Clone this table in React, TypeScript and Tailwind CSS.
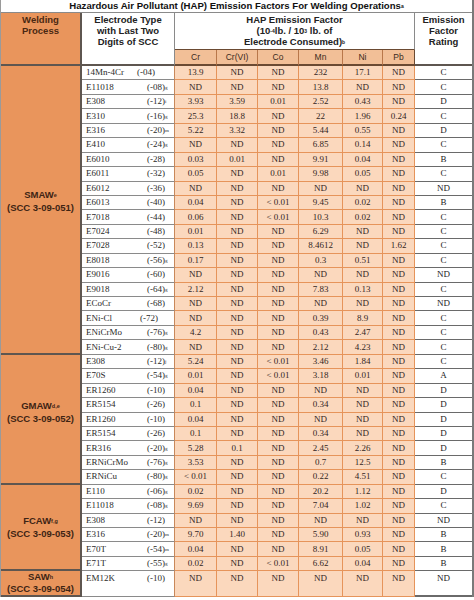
import React from 'react';

type Row = {
  name: string;
  code: string;
  sup?: string;
  wide?: boolean;
  vals: string[];
  rating: string;
};

const r = (name: string, code: string, sup: string, vals: string, rating: string, wide = false): Row => ({
  name,
  code,
  sup: sup || undefined,
  wide,
  vals: vals.split(' '),
  rating,
});

const groups: { label: string; scc: string; sup: string; shift: string; rows: Row[] }[] = [
  {
    label: 'SMAW',
    sup: 'e',
    scc: '(SCC 3-09-051)',
    shift: 'pb-[16px]',
    rows: [
      r('14Mn-4Cr', '(-04)', '', '13.9 ND ND 232 17.1 ND', 'C', true),
      r('E11018', '(-08)', 'g', 'ND ND ND 13.8 ND ND', 'C'),
      r('E308', '(-12)', 'i', '3.93 3.59 0.01 2.52 0.43 ND', 'D'),
      r('E310', '(-16)', 'g', '25.3 18.8 ND 22 1.96 0.24', 'C'),
      r('E316', '(-20)', 'm', '5.22 3.32 ND 5.44 0.55 ND', 'D'),
      r('E410', '(-24)', 'g', 'ND ND ND 6.85 0.14 ND', 'C'),
      r('E6010', '(-28)', '', '0.03 0.01 ND 9.91 0.04 ND', 'B'),
      r('E6011', '(-32)', '', '0.05 ND 0.01 9.98 0.05 ND', 'C'),
      r('E6012', '(-36)', '', 'ND ND ND ND ND ND', 'ND'),
      r('E6013', '(-40)', '', '0.04 ND <\u00a00.01 9.45 0.02 ND', 'B'),
      r('E7018', '(-44)', '', '0.06 ND <\u00a00.01 10.3 0.02 ND', 'C'),
      r('E7024', '(-48)', '', '0.01 ND ND 6.29 ND ND', 'C'),
      r('E7028', '(-52)', '', '0.13 ND ND 8.4612 ND 1.62', 'C'),
      r('E8018', '(-56)', 'g', '0.17 ND ND 0.3 0.51 ND', 'C'),
      r('E9016', '(-60)', '', 'ND ND ND ND ND ND', 'ND'),
      r('E9018', '(-64)', 'g', '2.12 ND ND 7.83 0.13 ND', 'C'),
      r('ECoCr', '(-68)', '', 'ND ND ND ND ND ND', 'ND'),
      r('ENi-Cl', '(-72)', '', 'ND ND ND 0.39 8.9 ND', 'C', true),
      r('ENiCrMo', '(-76)', 'g', '4.2 ND ND 0.43 2.47 ND', 'C'),
      r('ENi-Cu-2', '(-80)', 'g', 'ND ND ND 2.12 4.23 ND', 'C'),
    ],
  },
  {
    label: 'GMAW',
    sup: 'd,e',
    scc: '(SCC 3-09-052)',
    shift: 'pb-[14px]',
    rows: [
      r('E308', '(-12)', 'j', '5.24 ND <\u00a00.01 3.46 1.84 ND', 'C'),
      r('E70S', '(-54)', 'g', '0.01 ND <\u00a00.01 3.18 0.01 ND', 'A'),
      r('ER1260', '(-10)', '', '0.04 ND ND ND ND ND', 'D'),
      r('ER5154', '(-26)', '', '0.1 ND ND 0.34 ND ND', 'D'),
      r('ER1260', '(-10)', '', '0.04 ND ND ND ND ND', 'D'),
      r('ER5154', '(-26)', '', '0.1 ND ND 0.34 ND ND', 'D'),
      r('ER316', '(-20)', 'g', '5.28 0.1 ND 2.45 2.26 ND', 'D'),
      r('ERNiCrMo', '(-76)', 'g', '3.53 ND ND 0.7 12.5 ND', 'B'),
      r('ERNiCu', '(-80)', 'g', '<\u00a00.01 ND ND 0.22 4.51 ND', 'C'),
    ],
  },
  {
    label: 'FCAW',
    sup: 'f,g',
    scc: '(SCC 3-09-053)',
    shift: 'pb-0',
    rows: [
      r('E110', '(-06)', 'g', '0.02 ND ND 20.2 1.12 ND', 'D'),
      r('E11018', '(-08)', 'g', '9.69 ND ND 7.04 1.02 ND', 'C'),
      r('E308', '(-12)', '', 'ND ND ND ND ND ND', 'ND'),
      r('E316', '(-20)', 'm', '9.70 1.40 ND 5.90 0.93 ND', 'B'),
      r('E70T', '(-54)', 'm', '0.04 ND ND 8.91 0.05 ND', 'B'),
      r('E71T', '(-55)', 'g', '0.02 ND <\u00a00.01 6.62 0.04 ND', 'B'),
    ],
  },
];

const metals = ['Cr', 'Cr(VI)', 'Co', 'Mn', 'Ni', 'Pb'];

const sans = "font-['Liberation_Sans',Arial,sans-serif]";
const serif = "font-['Liberation_Serif','Times_New_Roman',serif]";

function Electrode({ row }: { row: Row }) {
  return (
    <div className={`flex items-center pl-[4px] text-[9px] text-[#2a2a2a] leading-[13px] ${serif}`}>
      <span className={row.wide ? 'w-[51px] shrink-0' : 'w-[61px] shrink-0'}>{row.name}</span>
      {row.name === 'ENi-Cl' ? <span className="w-[3px]" /> : null}
      <span className="whitespace-nowrap">
        {row.code}
        {row.sup && <sup className="text-[5px] relative -top-[1px]">{row.sup}</sup>}
      </span>
    </div>
  );
}

export default function App() {
  return (
    <div className={`w-[474px] h-[600px] overflow-hidden bg-white ${sans}`}>
      <div className="w-[474px] border-l border-[#9a9a9a] border-r-2 border-r-[#7a7a7a]">
        {/* Title */}
        <div className="h-[13px] border-b border-[#8a8a8a] text-center text-[9.6px] font-bold leading-[12px] text-[#111]">
          Hazardous Air Pollutant (HAP) Emission Factors For Welding Operations
          <sup className="text-[5px] relative -top-[1px]">a</sup>
        </div>

        <table className="table-fixed border-separate border-spacing-0 w-[471px]">
          <colgroup>
            <col className="w-[81px]" />
            <col className="w-[93px]" />
            <col className="w-[42px]" />
            <col className="w-[41px]" />
            <col className="w-[41px]" />
            <col className="w-[44px]" />
            <col className="w-[40px]" />
            <col className="w-[32px]" />
            <col className="w-[57px]" />
          </colgroup>
          <thead>
            <tr className="h-[37px]">
              <td
                rowSpan={2}
                className="bg-[#e9955c] border-r-2 border-b-2 border-[#5e5650] align-top text-center text-[9.5px] font-bold leading-[11px] text-[#4a2812] pt-[1px]"
              >
                Welding
                <br />
                Process
              </td>
              <td
                rowSpan={2}
                className="bg-white border-r border-b-2 border-r-[#8a8a8a] border-b-[#5e5650] align-top text-center text-[9.5px] font-bold leading-[11px] text-[#222] pt-[1px]"
              >
                Electrode Type
                <br />
                with Last Two
                <br />
                Digits of SCC
              </td>
              <td
                colSpan={6}
                className="bg-white border-r border-b border-r-[#8a8a8a] border-b-[#6b4a32] align-top text-center text-[9.5px] font-bold leading-[11px] text-[#222] pt-[1px]"
              >
                HAP Emission Factor
                <br />
                (10<sup className="text-[5px] relative -top-[1px]">-4</sup>lb. / 10<sup className="text-[5px] relative -top-[1px]">3</sup> lb. of
                <br />
                Electrode Consumed)<sup className="text-[5px] relative -top-[1px]">b</sup>
              </td>
              <td
                rowSpan={2}
                className="bg-white border-b-2 border-[#5e5650] align-top text-center text-[9.5px] font-bold leading-[11px] text-[#222] pt-[1px]"
              >
                Emission
                <br />
                Factor
                <br />
                Rating
              </td>
            </tr>
            <tr className="h-[16px]">
              {metals.map((m, i) => (
                <td
                  key={m}
                  className={`bg-[#f2bf97] border-b-2 border-b-[#6b4a32] text-center text-[8.5px] leading-[14px] text-[#3a2a20] ${
                    i < 5 ? 'border-r border-r-[#b9774a]' : 'border-r border-r-[#6b4a32]'
                  }`}
                >
                  {m}
                </td>
              ))}
            </tr>
          </thead>
          <tbody>
            {groups.map((g) =>
              g.rows.map((row, ri) => (
                <tr key={g.label + ri} className="h-[14.45px]">
                  {ri === 0 && (
                    <td
                      rowSpan={g.rows.length}
                      className={`bg-[#e9955c] border-r-2 border-b-2 border-[#5e5650] align-middle text-center ${sans} text-[9.5px] font-bold leading-[13px] text-[#3e2414] ${g.shift}`}
                    >
                      {g.label}
                      <sup className="text-[5.5px] relative -top-[1px]">{g.sup}</sup>
                      <br />
                      {g.scc}
                    </td>
                  )}
                  <td className="bg-white border-r border-b border-r-[#c9885a] border-b-[#8a8a8a] p-0">
                    <Electrode row={row} />
                  </td>
                  {row.vals.map((v, vi) => (
                    <td
                      key={vi}
                      className={`bg-[#fbd8bd] border-r border-b border-[#e6945a] text-center ${serif} text-[9px] leading-[13px] text-[#33261d] p-0`}
                    >
                      {v}
                    </td>
                  ))}
                  <td className={`bg-white border-b border-[#6a6a6a] text-center ${serif} text-[9px] leading-[13px] text-[#222] p-0`}>
                    {row.rating}
                  </td>
                </tr>
              ))
            )}
            <tr className="h-[25px]">
              <td className={`bg-[#e9955c] border-r-2 border-b-2 border-[#5e5650] align-middle text-center ${sans} text-[9.5px] font-bold leading-[12px] text-[#3e2414]`}>
                SAW<sup className="text-[5.5px] relative -top-[1px]">h</sup>
                <br />
                (SCC 3-09-054)
              </td>
              <td className="bg-white border-r border-b border-r-[#c9885a] border-b-[#8a8a8a] align-top p-0 pt-[1px]">
                <Electrode row={{ name: 'EM12K', code: '(-10)', vals: [], rating: 'ND' }} />
              </td>
              {metals.map((m) => (
                <td
                  key={m}
                  className={`bg-[#fbd8bd] border-r border-b border-[#e6945a] align-top text-center ${serif} text-[9px] leading-[13px] text-[#33261d] p-0 pt-[1px]`}
                >
                  ND
                </td>
              ))}
              <td className={`bg-white border-b-2 border-[#6a6a6a] align-top text-center ${serif} text-[9px] leading-[13px] text-[#222] p-0 pt-[1px]`}>
                ND
              </td>
            </tr>
          </tbody>
        </table>
      </div>
    </div>
  );
}
